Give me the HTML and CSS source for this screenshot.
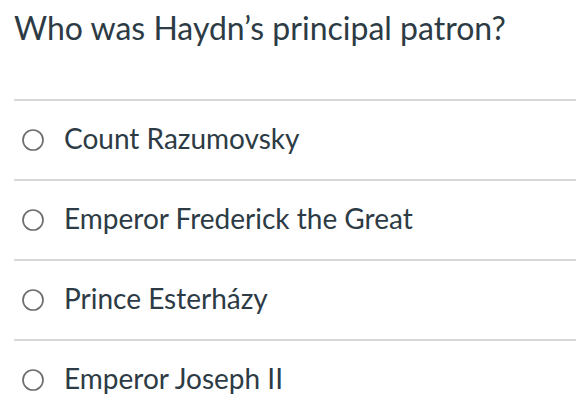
FILE: index.html
```html
<!DOCTYPE html>
<html>
<head>
<meta charset="utf-8">
<link rel="stylesheet" href="styles.css">
</head>
<body>
<div class="question">
  <h1 class="prompt">Who was Haydn’s principal patron?</h1>
  <div class="answers">
    <label class="answer"><svg class="radio" viewBox="0 0 22 22"><circle cx="11" cy="11" r="10"/></svg><span class="label">Count Razumovsky</span></label>
    <label class="answer"><svg class="radio" viewBox="0 0 22 22"><circle cx="11" cy="11" r="10"/></svg><span class="label">Emperor Frederick the Great</span></label>
    <label class="answer"><svg class="radio" viewBox="0 0 22 22"><circle cx="11" cy="11" r="10"/></svg><span class="label">Prince Esterházy</span></label>
    <label class="answer"><svg class="radio" viewBox="0 0 22 22"><circle cx="11" cy="11" r="10"/></svg><span class="label">Emperor Joseph II</span></label>
  </div>
</div>
</body>
</html>
```
FILE: styles.css
```css
html, body {
  margin: 0;
  padding: 0;
  background: #fff;
}
body {
  font-family: Lato, "Open Sans", sans-serif;
  color: #2d3b45;
}
.question {
  padding: 0 0 0 14px;
}
.prompt {
  margin: 0;
  padding-top: 9px;
  height: 99px;
  box-sizing: border-box;
  font-size: 32px;
  font-weight: 400;
  line-height: 38px;
}
.answers {
  display: flex;
  flex-direction: column;
}
.answer {
  display: flex;
  align-items: center;
  height: 78px;
  border-top: 2px solid #d9d9d9;
  padding-left: 8px;
}
.radio {
  width: 22px;
  height: 22px;
  flex: none;
  margin-right: 20px;
}
.radio circle {
  fill: #fff;
  stroke: #6e6e6e;
  stroke-width: 1.7;
}
.label {
  font-size: 28px;
  line-height: 34px;
  margin-bottom: 5px;
}
```
